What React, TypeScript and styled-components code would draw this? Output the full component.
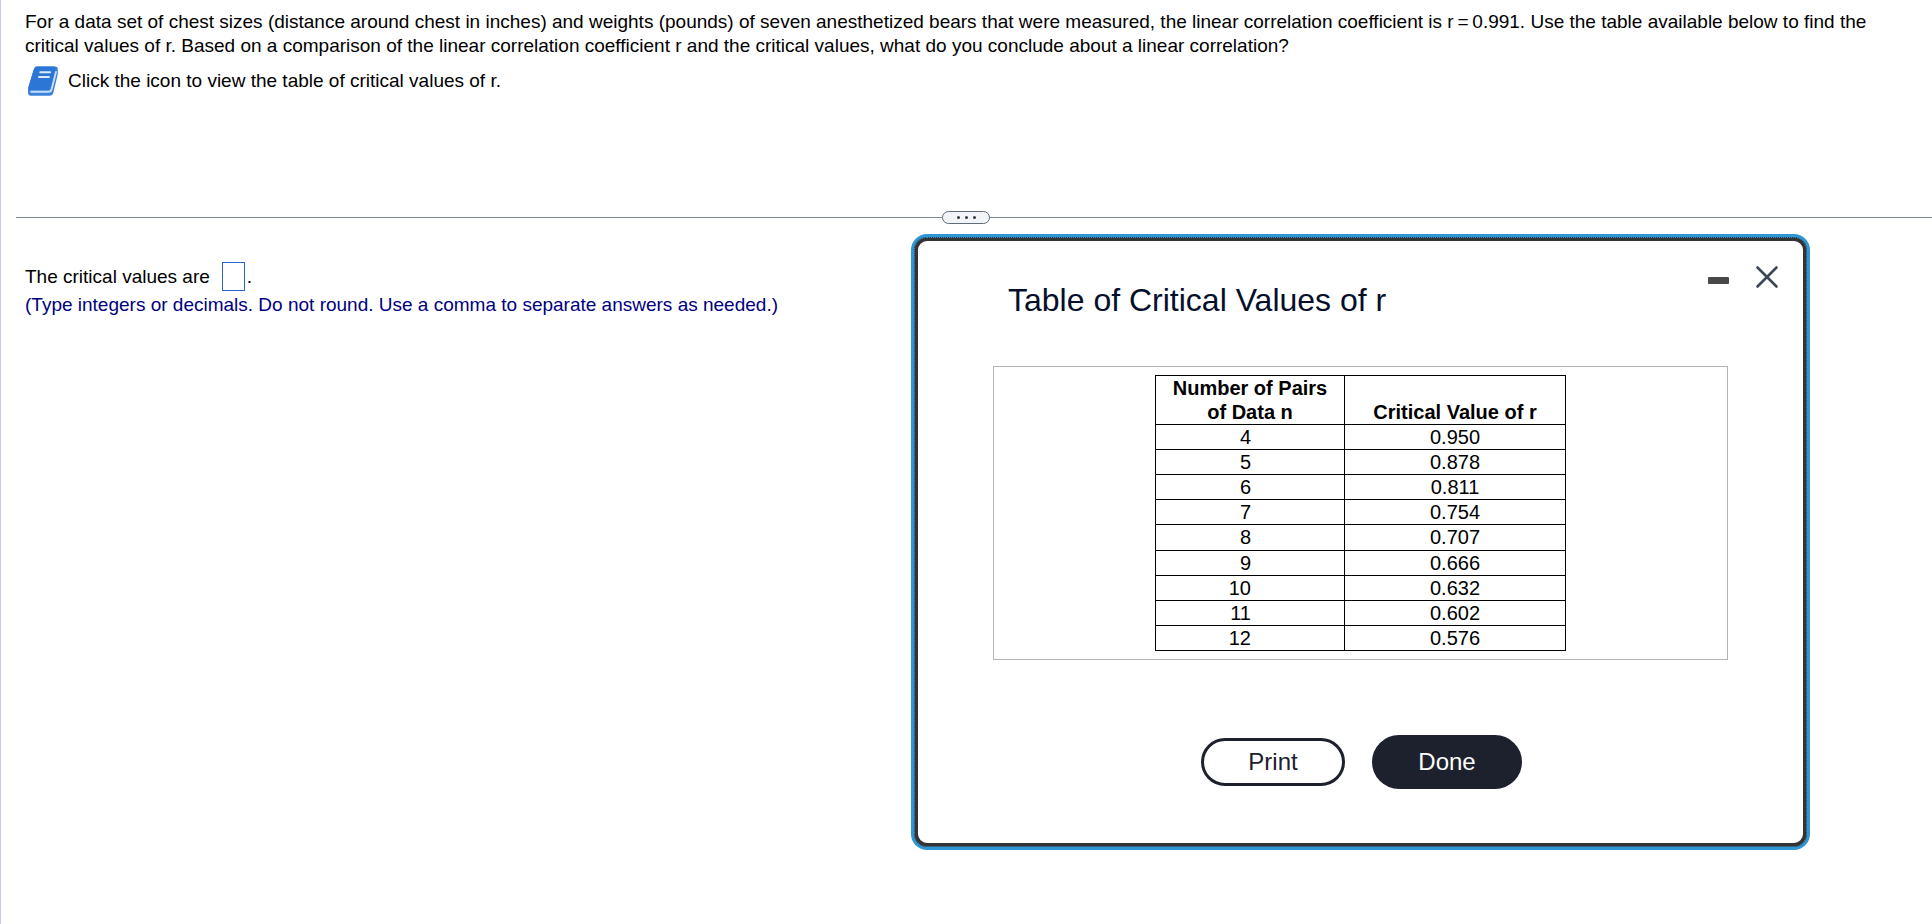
import React from "react";
import styled, { createGlobalStyle } from "styled-components";

const GlobalStyle = createGlobalStyle`
  *, *::before, *::after { box-sizing: border-box; }
  body {
    margin: 0;
    background: #fff;
    color: #000;
    font-family: "Liberation Sans", Arial, Helvetica, sans-serif;
    font-size: 19px;
    line-height: 24px;
  }
`;

const Page = styled.main`
  position: relative;
  min-height: 100vh;
  box-shadow: inset 1px 0 #c5cbe0;
`;

const Question = styled.section`
  min-height: 211px;
  padding: 10px 16px 0 25px;
`;

const Paragraph = styled.p`
  margin: 0;
`;

const TableLink = styled.button`
  display: flex;
  align-items: center;
  gap: 10px;
  margin: 7px 0 0;
  padding: 0 0 0 2px;
  border: 0;
  background: none;
  color: inherit;
  font: inherit;
  cursor: pointer;
`;

const Divider = styled.div`
  display: grid;
  grid-template-columns: 1fr auto 1fr;
  align-items: center;
`;

const Rule = styled.span<{ $inset?: boolean }>`
  height: 1px;
  margin-left: ${(p) => (p.$inset ? "16px" : "0")};
  background: #7b8998;
`;

const Handle = styled.button`
  display: flex;
  align-items: center;
  justify-content: center;
  gap: 5px;
  width: 48px;
  height: 13px;
  padding: 0;
  border: 1px solid #606b7c;
  border-radius: 7px;
  background: #f2f4f7;
`;

const Dot = styled.span`
  width: 3px;
  height: 3px;
  border-radius: 50%;
  background: #333a45;
`;

const Answer = styled.section`
  padding: 38px 25px 0;
`;

const AnswerRow = styled.div`
  display: flex;
  align-items: center;
`;

const AnswerInput = styled.input`
  width: 23px;
  height: 29px;
  margin: 0 2px 0 12px;
  padding: 0 2px;
  border: 1px solid #2b66cc;
  font: inherit;
`;

const Hint = styled.p`
  margin: 0;
  line-height: 28px;
  color: #000080;
`;

const Dialog = styled.section`
  position: absolute;
  top: 237px;
  right: 125px;
  width: 893px;
  max-width: calc(100% - 32px);
  padding: 22px 75px 54px;
  border: 4px solid #333;
  border-radius: 13px;
  background: #fff;
  box-shadow: 0 0 0 3px #2f96d3;

  &::before {
    content: "";
    position: absolute;
    inset: -4px;
    border: 1px dotted #2f96d3;
    border-radius: 13px;
    pointer-events: none;
  }
`;

const DialogHeader = styled.header`
  display: flex;
  justify-content: space-between;
  margin-right: -53px;
`;

const Title = styled.h2`
  margin: 19px 0 0 15px;
  color: #050f2c;
  font-size: 32px;
  font-weight: 400;
  line-height: 36px;
`;

const WindowControls = styled.div`
  display: flex;
  align-items: flex-start;
  gap: 20px;
`;

const IconButton = styled.button`
  display: block;
  padding: 2px;
  border: 0;
  background: none;
  line-height: 0;
  cursor: pointer;
`;

const TableFrame = styled.div`
  margin-top: 48px;
  padding: 8px;
  border: 1px solid #b5b5b5;
`;

const Values = styled.table`
  width: 411px;
  height: 276px;
  margin: 0 auto;
  border-collapse: collapse;
  table-layout: fixed;
  font-size: 20px;
`;

const HeadCell = styled.th<{ $width: number }>`
  width: ${(p) => p.$width}px;
  padding: 0 16px;
  border: 1px solid #000;
  font-weight: 700;
  vertical-align: bottom;
`;

const Cell = styled.td<{ $count?: boolean }>`
  padding: 0 ${(p) => (p.$count ? "93px" : "0")} 0 0;
  border: 1px solid #000;
  text-align: ${(p) => (p.$count ? "right" : "center")};
`;

const Actions = styled.footer`
  display: flex;
  align-items: center;
  justify-content: center;
  gap: 27px;
  margin-top: 75px;
  padding-left: 2px;
`;

const ActionButton = styled.button<{ $primary?: boolean }>`
  width: ${(p) => (p.$primary ? 150 : 144)}px;
  height: ${(p) => (p.$primary ? 54 : 48)}px;
  padding: 0;
  border: 3px solid #1c212d;
  border-radius: 27px;
  background: ${(p) => (p.$primary ? "#1c212d" : "#fff")};
  color: ${(p) => (p.$primary ? "#fff" : "#1c212d")};
  font: inherit;
  font-size: 24px;
  cursor: pointer;
`;

const rows: [number, string][] = [
  [4, "0.950"],
  [5, "0.878"],
  [6, "0.811"],
  [7, "0.754"],
  [8, "0.707"],
  [9, "0.666"],
  [10, "0.632"],
  [11, "0.602"],
  [12, "0.576"],
];

const BookIcon = () => (
  <svg width="31" height="32" viewBox="0 0 31 32" aria-hidden="true">
    <path d="M10 1.5 H28 Q30.8 1.5 30.8 4 V9 L26.4 27.5 Q25.6 30.8 22.5 30.8 H4 Q.8 30.8 1 27 V23.5 L6.6 5 Q7.6 1.5 10 1.5Z" fill="#3b82dd" />
    <path d="M10 1.5 H26.5 Q29 1.5 28.4 4 L23.5 22.5 Q22.8 25 20.5 25 H3.5 Q1.6 25 1.2 23 L6.6 5 Q7.6 1.5 10 1.5Z" fill="#2c76d6" />
    <path d="M4.2 26.8 H21.5 Q24 26.8 24.7 24 L29 7" fill="none" stroke="#c9defa" strokeWidth="1.9" strokeLinecap="round" />
    <path d="M13.2 7.2 H23.2 M12 12 H22" stroke="#dceafc" strokeWidth="1.9" strokeLinecap="round" />
  </svg>
);

export default function App() {
  return (
    <>
      <GlobalStyle />
      <Page>
        <Question>
          <Paragraph>
            For a data set of chest sizes (distance around chest in inches) and weights (pounds) of seven anesthetized
            bears that were measured, the linear correlation coefficient is r{"\u2009"}={"\u2009"}0.991. Use the table available
            below to find the critical values of r. Based on a comparison of the linear correlation coefficient r and
            the critical values, what do you conclude about a linear correlation?
          </Paragraph>
          <TableLink type="button">
            <BookIcon />
            Click the icon to view the table of critical values of r.
          </TableLink>
        </Question>

        <Divider>
          <Rule $inset />
          <Handle type="button" aria-label="Resize panels">
            <Dot />
            <Dot />
            <Dot />
          </Handle>
          <Rule />
        </Divider>

        <Answer>
          <AnswerRow>
            <label htmlFor="critical-values">The critical values are</label>
            <AnswerInput id="critical-values" type="text" aria-describedby="answer-hint" />.
          </AnswerRow>
          <Hint id="answer-hint">
            (Type integers or decimals. Do not round. Use a comma to separate answers as needed.)
          </Hint>
        </Answer>

        <Dialog role="dialog" aria-labelledby="dialog-title">
          <DialogHeader>
            <Title id="dialog-title">Table of Critical Values of r</Title>
            <WindowControls>
              <IconButton type="button" aria-label="Minimize">
                <svg width="24" height="24" viewBox="0 0 24 24">
                  <rect x="1" y="12" width="21" height="7" rx="1" fill="#484848" />
                </svg>
              </IconButton>
              <IconButton type="button" aria-label="Close">
                <svg width="24" height="24" viewBox="0 0 24 24">
                  <path d="M2.5 2.5 L21.5 21.5 M21.5 2.5 L2.5 21.5" stroke="#3c4657" strokeWidth="2.6" strokeLinecap="round" />
                </svg>
              </IconButton>
            </WindowControls>
          </DialogHeader>

          <TableFrame>
            <Values>
              <thead>
                <tr>
                  <HeadCell scope="col" $width={189}>Number of Pairs of Data n</HeadCell>
                  <HeadCell scope="col" $width={221}>Critical Value of r</HeadCell>
                </tr>
              </thead>
              <tbody>
                {rows.map(([n, value]) => (
                  <tr key={n}>
                    <Cell $count>{n}</Cell>
                    <Cell>{value}</Cell>
                  </tr>
                ))}
              </tbody>
            </Values>
          </TableFrame>

          <Actions>
            <ActionButton type="button">Print</ActionButton>
            <ActionButton type="button" $primary>Done</ActionButton>
          </Actions>
        </Dialog>
      </Page>
    </>
  );
}
